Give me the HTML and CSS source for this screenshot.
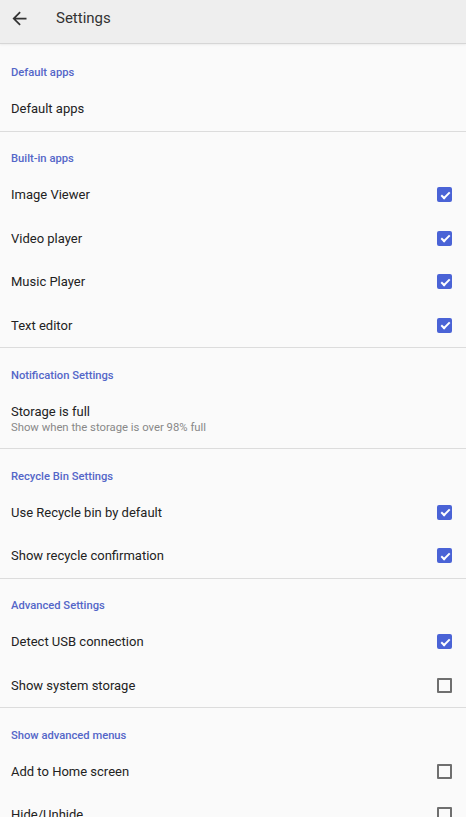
FILE: index.html
```html
<!DOCTYPE html>
<html lang="en">
<head>
    <meta charset="UTF-8">
    <meta name="viewport" content="width=device-width, initial-scale=1.0">
    <title>Settings</title>
    <link rel="stylesheet" href="styles.css">
</head>
<body>

<!-- Toolbar -->
<div class="toolbar">
    <svg class="back-icon" width="21" height="21" viewBox="0 0 24 24">
        <path d="M20 11H7.83l5.59-5.59L12 4l-8 8 8 8 1.41-1.41L7.83 13H20v-2z" fill="#333"/>
    </svg>
    <span class="toolbar-title">Settings</span>
</div>

<div class="settings">

    <!-- Default apps -->
    <div class="section">
        <div class="section-title">Default apps</div>
        <div class="item"><span class="item-label">Default apps</span></div>
    </div>

    <!-- Built-in apps -->
    <div class="section">
        <div class="section-title">Built-in apps</div>
        <div class="item"><span class="item-label">Image Viewer</span><span class="check on"></span></div>
        <div class="item"><span class="item-label">Video player</span><span class="check on"></span></div>
        <div class="item"><span class="item-label">Music Player</span><span class="check on"></span></div>
        <div class="item"><span class="item-label">Text editor</span><span class="check on"></span></div>
    </div>

    <!-- Notification -->
    <div class="section">
        <div class="section-title">Notification Settings</div>
        <div class="item item-two">
            <div>
                <div class="item-label">Storage is full</div>
                <div class="item-sub">Show when the storage is over 98% full</div>
            </div>
        </div>
    </div>

    <!-- Recycle bin -->
    <div class="section">
        <div class="section-title">Recycle Bin Settings</div>
        <div class="item"><span class="item-label">Use Recycle bin by default</span><span class="check on"></span></div>
        <div class="item"><span class="item-label">Show recycle confirmation</span><span class="check on"></span></div>
    </div>

    <!-- Advanced -->
    <div class="section">
        <div class="section-title">Advanced Settings</div>
        <div class="item"><span class="item-label">Detect USB connection</span><span class="check on"></span></div>
        <div class="item"><span class="item-label">Show system storage</span><span class="check"></span></div>
    </div>

    <!-- Advanced menus -->
    <div class="section">
        <div class="section-title">Show advanced menus</div>
        <div class="item"><span class="item-label">Add to Home screen</span><span class="check"></span></div>
        <div class="item"><span class="item-label">Hide/Unhide</span><span class="check"></span></div>
    </div>

</div>

</body>
</html>
```

FILE: styles.css
```css
body {
    font-family: Roboto, "Noto Sans", sans-serif;
    margin: 0;
    padding: 0;
    background-color: #fafafa;
    color: #222;
    height: 817px;
    overflow: hidden;
}

/* Toolbar */
.toolbar {
    height: 44px;
    background: #eeeeee;
    border-bottom: 1px solid #d6d6d6;
    box-shadow: 0 1px 2px rgba(0, 0, 0, 0.06);
    display: flex;
    align-items: center;
    box-sizing: border-box;
}

.back-icon {
    margin-left: 9px;
    margin-right: 26px;
    margin-bottom: 7px;
}

.toolbar-title {
    font-size: 15px;
    color: #333;
    margin-bottom: 7px;
}

/* Sections */
.section {
    border-bottom: 1px solid #dcdcdc;
}

.section:first-child .section-title {
    padding-top: 23px;
}

.section-title {
    color: #5466c8;
    font-size: 11.2px;
    font-weight: 500;
    line-height: 12px;
    padding: 21.5px 11px 8px;
}

.item {
    height: 43.5px;
    display: flex;
    align-items: center;
    justify-content: space-between;
    padding: 0 14px 0 11px;
}

.item-two {
    height: 58.5px;
}

.item-label {
    font-size: 13px;
    color: #222;
}

.item-sub {
    font-size: 11.3px;
    color: #888;
    margin-top: 2px;
}

/* Checkboxes */
.check {
    width: 15px;
    height: 15px;
    box-sizing: border-box;
    border: 2px solid #6f6f6f;
    border-radius: 1px;
    position: relative;
}

.check.on {
    background: #4a63d6;
    border-color: #4a63d6;
    border-radius: 2px;
}

.check.on::after {
    content: "";
    position: absolute;
    left: 3.5px;
    top: 0.5px;
    width: 3px;
    height: 7px;
    border: solid #fff;
    border-width: 0 2px 2px 0;
    transform: rotate(45deg);
}
```
